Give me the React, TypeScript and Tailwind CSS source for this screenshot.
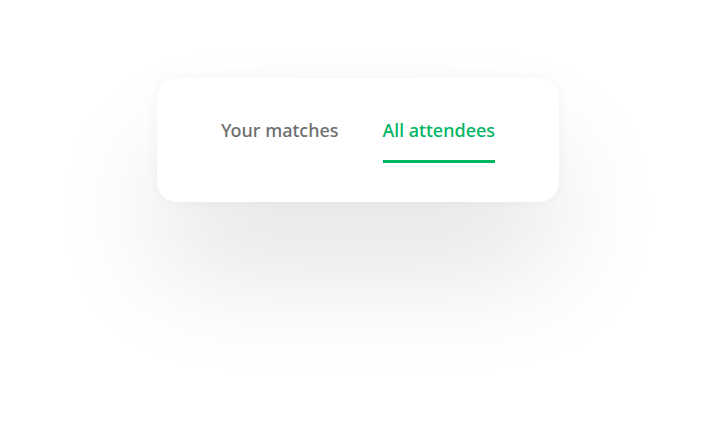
export default function App() {
  return (
    <div className="w-[716px] h-[440px] bg-white flex justify-center pt-[78px]" style={{ fontFamily: '"Noto Sans", "Open Sans", sans-serif' }}>
      <div className="w-[402px] h-[124px] bg-white rounded-[20px] shadow-[0_0_14px_rgba(0,0,0,0.04),0_70px_120px_-6px_rgba(0,0,0,0.12)] flex justify-center gap-[44px] pt-[37px]">
        <div className="flex flex-col">
          <span className="text-[18px] leading-[30px] font-medium text-[#6e6e6e]">Your matches</span>
        </div>
        <div className="flex flex-col">
          <span className="text-[18px] leading-[30px] font-medium text-[#00b562]">All attendees</span>
          <div className="h-[3px] bg-[#00b562] mt-[15px]" />
        </div>
      </div>
    </div>
  );
}
